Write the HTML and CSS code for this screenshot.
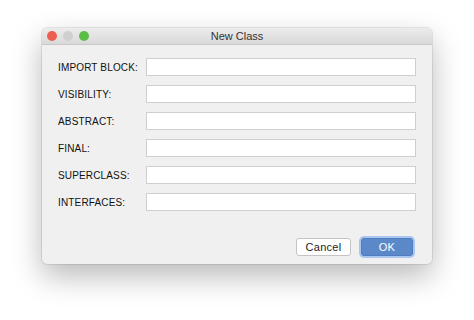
FILE: index.html
```html
<!DOCTYPE html>
<html lang="en">
<head>
    <meta charset="UTF-8">
    <title>New Class</title>
    <link rel="stylesheet" href="styles.css">
</head>
<body>
    <div class="window">
        <div class="titlebar">
            <div class="lights">
                <span class="light red"></span>
                <span class="light grey"></span>
                <span class="light green"></span>
            </div>
            <div class="title">New Class</div>
        </div>
        <form class="content">
            <div class="row">
                <label for="import_block">IMPORT BLOCK:</label>
                <input type="text" id="import_block">
            </div>
            <div class="row">
                <label for="visibility">VISIBILITY:</label>
                <input type="text" id="visibility">
            </div>
            <div class="row">
                <label for="abstract">ABSTRACT:</label>
                <input type="text" id="abstract">
            </div>
            <div class="row">
                <label for="final">FINAL:</label>
                <input type="text" id="final">
            </div>
            <div class="row">
                <label for="superclass">SUPERCLASS:</label>
                <input type="text" id="superclass">
            </div>
            <div class="row">
                <label for="interfaces">INTERFACES:</label>
                <input type="text" id="interfaces">
            </div>
            <div class="buttons">
                <button type="button" class="btn">Cancel</button>
                <button type="submit" class="btn primary">OK</button>
            </div>
        </form>
    </div>
</body>
</html>
```

FILE: styles.css
```css
html, body {
    height: 100%;
}
body {
    margin: 0;
    padding: 0;
    background-color: #fff;
    font-family: "Liberation Sans", Arial, sans-serif;
    color: #222;
}
.window {
    width: 390px;
    height: 236px;
    margin: 28px 0 0 42px;
    background-color: #f0f0f0;
    border-radius: 5px;
    box-shadow: 0 0 0 1px rgba(0, 0, 0, 0.08), 0 12px 30px rgba(0, 0, 0, 0.28);
    display: flex;
    flex-direction: column;
    overflow: hidden;
}
.titlebar {
    height: 16px;
    display: flex;
    align-items: center;
    position: relative;
    background: linear-gradient(#ececec, #d9d9d9);
    border-bottom: 1px solid #c8c8c8;
}
.lights {
    display: flex;
    gap: 6px;
    padding-left: 5px;
}
.light {
    width: 10px;
    height: 10px;
    border-radius: 50%;
}
.red {
    background-color: #ec5d52;
}
.grey {
    background-color: #cfcfcf;
}
.green {
    background-color: #5bbf45;
}
.title {
    position: absolute;
    left: 0;
    right: 0;
    text-align: center;
    font-size: 11px;
    color: #333;
}
.content {
    flex: 1;
    display: flex;
    flex-direction: column;
    gap: 9px;
    padding: 13px 16px 8px 16px;
}
.row {
    display: flex;
    align-items: center;
}
label {
    flex-shrink: 0;
    width: 88px;
    white-space: nowrap;
    font-size: 10px;
    letter-spacing: 0.15px;
    color: #111;
}
input[type="text"] {
    flex: 1;
    height: 18px;
    box-sizing: border-box;
    border: 1px solid #cfcfcf;
    background-color: #fff;
    margin: 0;
    padding: 0 3px;
}
.buttons {
    margin-top: auto;
    display: flex;
    justify-content: flex-end;
    gap: 10px;
    padding-right: 3px;
}
.btn {
    height: 18px;
    width: 55px;
    padding: 0;
    font-family: "Liberation Sans", Arial, sans-serif;
    font-size: 11px;
    letter-spacing: 0.3px;
    color: #222;
    background-color: #fff;
    border: 1px solid #c4c4c4;
    border-radius: 3px;
}
.primary {
    width: 52px;
    color: #fff;
    background-color: #5a88c8;
    border-color: #4f7dbf;
    box-shadow: 0 0 0 2px #a9c6ee;
}
```
